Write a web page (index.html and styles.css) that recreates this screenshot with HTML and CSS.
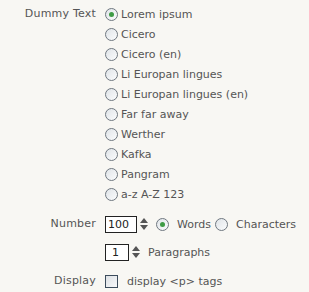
FILE: index.html
```html
<!DOCTYPE html>
<html lang="en">
<head>
 <meta charset="UTF-8">
 <title>Dummy Text</title>
 <link rel="stylesheet" href="styles.css">
</head>
<body>
 <div class="form">
  <div class="label">Dummy Text</div>
  <div class="options">
   <label class="opt"><input type="radio" name="src" checked> Lorem ipsum</label>
   <label class="opt"><input type="radio" name="src"> Cicero</label>
   <label class="opt"><input type="radio" name="src"> Cicero (en)</label>
   <label class="opt"><input type="radio" name="src"> Li Europan lingues</label>
   <label class="opt"><input type="radio" name="src"> Li Europan lingues (en)</label>
   <label class="opt"><input type="radio" name="src"> Far far away</label>
   <label class="opt"><input type="radio" name="src"> Werther</label>
   <label class="opt"><input type="radio" name="src"> Kafka</label>
   <label class="opt"><input type="radio" name="src"> Pangram</label>
   <label class="opt"><input type="radio" name="src"> a-z A-Z 123</label>
  </div>

  <div class="label number-label">Number</div>
  <div class="numbers">
   <div class="line">
    <span class="num wide">100</span>
    <span class="spin"><i class="up"></i><i class="down"></i></span>
    <label class="opt inline"><input type="radio" name="unit" checked> Words</label>
    <label class="opt inline"><input type="radio" name="unit"> Characters</label>
   </div>
   <div class="line">
    <span class="num">1</span>
    <span class="spin"><i class="up"></i><i class="down"></i></span>
    <span class="para">Paragraphs</span>
   </div>
  </div>

  <div class="label display-label">Display</div>
  <div class="display">
   <label class="opt"><input type="checkbox"> display &lt;p&gt; tags</label>
  </div>
 </div>
</body>
</html>
```

FILE: styles.css
```css
body {
    margin: 0;
    background: #f8f7f3;
    font-family: "DejaVu Sans", Verdana, sans-serif;
    font-size: 11px;
    color: #555;
}

.form {
    display: grid;
    grid-template-columns: 96px auto;
    column-gap: 9px;
    padding-top: 4px;
}

.label {
    text-align: right;
    line-height: 20px;
    letter-spacing: 0.2px;
}

.options .opt {
    display: flex;
    align-items: center;
    height: 20px;
}

.opt {
    display: flex;
    align-items: center;
    gap: 3px;
}

input[type=radio], input[type=checkbox] {
    appearance: none;
    margin: 0;
    width: 13px;
    height: 13px;
    border: 1px solid #6f7780;
    background: linear-gradient(135deg, #dfe4e8, #fbfcfd);
    flex: none;
}

input[type=radio] {
    border-radius: 50%;
    position: relative;
}

input[type=radio]:checked::after {
    content: "";
    position: absolute;
    left: 3px;
    top: 3px;
    width: 5px;
    height: 5px;
    border-radius: 50%;
    background: #3e9b45;
}

input[type=checkbox] {
    border-color: #3c4c5c;
    background: linear-gradient(135deg, #dde1e5, #f7f8f9);
}

.number-label {
    margin-top: 10px;
}

.numbers {
    margin-top: 10px;
}

.line {
    display: flex;
    align-items: center;
    height: 20px;
    margin-bottom: 8px;
}

.num {
    display: inline-block;
    box-sizing: border-box;
    width: 24px;
    height: 17px;
    line-height: 15px;
    border: 1px solid #222;
    background: #fff;
    padding-left: 6px;
    color: #222;
}

.num.wide {
    width: 32px;
    padding-left: 2px;
}

.spin {
    display: flex;
    flex-direction: column;
    gap: 2px;
    margin: 0 8px 0 3px;
}

.spin i {
    display: block;
    width: 0;
    height: 0;
    border-left: 4px solid transparent;
    border-right: 4px solid transparent;
}

.spin .up {
    border-bottom: 5px solid #555;
}

.spin .down {
    border-top: 5px solid #555;
}

.opt.inline {
    margin-right: 4px;
    gap: 8px;
}

.display-label, .display {
    margin-top: 1px;
}

.display .opt {
    gap: 9px;
    height: 20px;
}
```
